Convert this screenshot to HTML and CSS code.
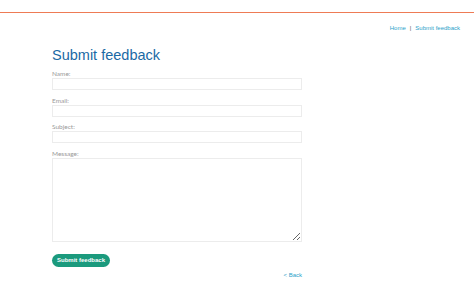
FILE: index.html
```html
<!DOCTYPE html>
<html lang="en">
<head>
    <meta charset="UTF-8">
    <meta name="viewport" content="width=device-width, initial-scale=1.0">
    <title>Submit feedback</title>
    <link rel="stylesheet" href="styles.css">
</head>
<body>

    <!-- Top bar -->
    <header class="top-bar"></header>

    <!-- Breadcrumb -->
    <nav class="crumbs">
        <a href="#">Home</a>
        <span class="sep">|</span>
        <a href="#">Submit feedback</a>
    </nav>

    <!-- Feedback form -->
    <main class="container">
        <h1>Submit feedback</h1>
        <form id="feedback-form" class="feedback-form">
            <label for="name">Name:</label>
            <input type="text" id="name">

            <label for="email">Email:</label>
            <input type="email" id="email">

            <label for="subject">Subject:</label>
            <input type="text" id="subject">

            <label for="message">Message:</label>
            <textarea id="message"></textarea>

            <button type="submit">Submit feedback</button>
        </form>
        <div class="back-row">
            <a href="#">&lt; Back</a>
        </div>
    </main>

</body>
</html>
```

FILE: styles.css
```css
/* Basic Reset */
* {
    margin: 0;
    padding: 0;
    box-sizing: border-box;
}

body {
    font-family: "Liberation Sans", Arial, sans-serif;
    background-color: #ffffff;
    color: #333;
}

a {
    color: #2a9fc9;
    text-decoration: none;
}

/* Top bar */
.top-bar {
    height: 13px;
    border-bottom: 1px solid #ee7b55;
}

/* Breadcrumb */
.crumbs {
    display: flex;
    justify-content: flex-end;
    gap: 4px;
    padding: 11px 14px 0 0;
    font-size: 6px;
    line-height: 8px;
}

.crumbs .sep {
    color: #555;
}

/* Layout */
.container {
    width: 250px;
    margin-left: 52px;
}

h1 {
    font-weight: normal;
    font-size: 14.5px;
    line-height: 20px;
    color: #1b6aa5;
    margin-top: 13px;
    margin-bottom: 5px;
}

/* Form */
.feedback-form {
    display: flex;
    flex-direction: column;
}

.feedback-form label {
    font-family: Lato, "Liberation Sans", sans-serif;
    font-size: 6.5px;
    line-height: 8px;
    color: #999;
}

.feedback-form input {
    height: 12px;
    border: 1px solid #ececec;
    margin-bottom: 6.5px;
    background: #fff;
}

.feedback-form textarea {
    height: 84px;
    border: 1px solid #ececec;
    resize: vertical;
    background: #fff;
}

.feedback-form button {
    align-self: flex-start;
    margin-top: 12px;
    height: 13px;
    padding: 0 5px;
    border: none;
    border-radius: 7px;
    background-color: #1b9a7d;
    color: #fff;
    font-family: "Liberation Sans", Arial, sans-serif;
    font-weight: bold;
    font-size: 6px;
    cursor: pointer;
}

.back-row {
    display: flex;
    justify-content: flex-end;
    margin-top: 4px;
    font-size: 6px;
    line-height: 8px;
}
```
